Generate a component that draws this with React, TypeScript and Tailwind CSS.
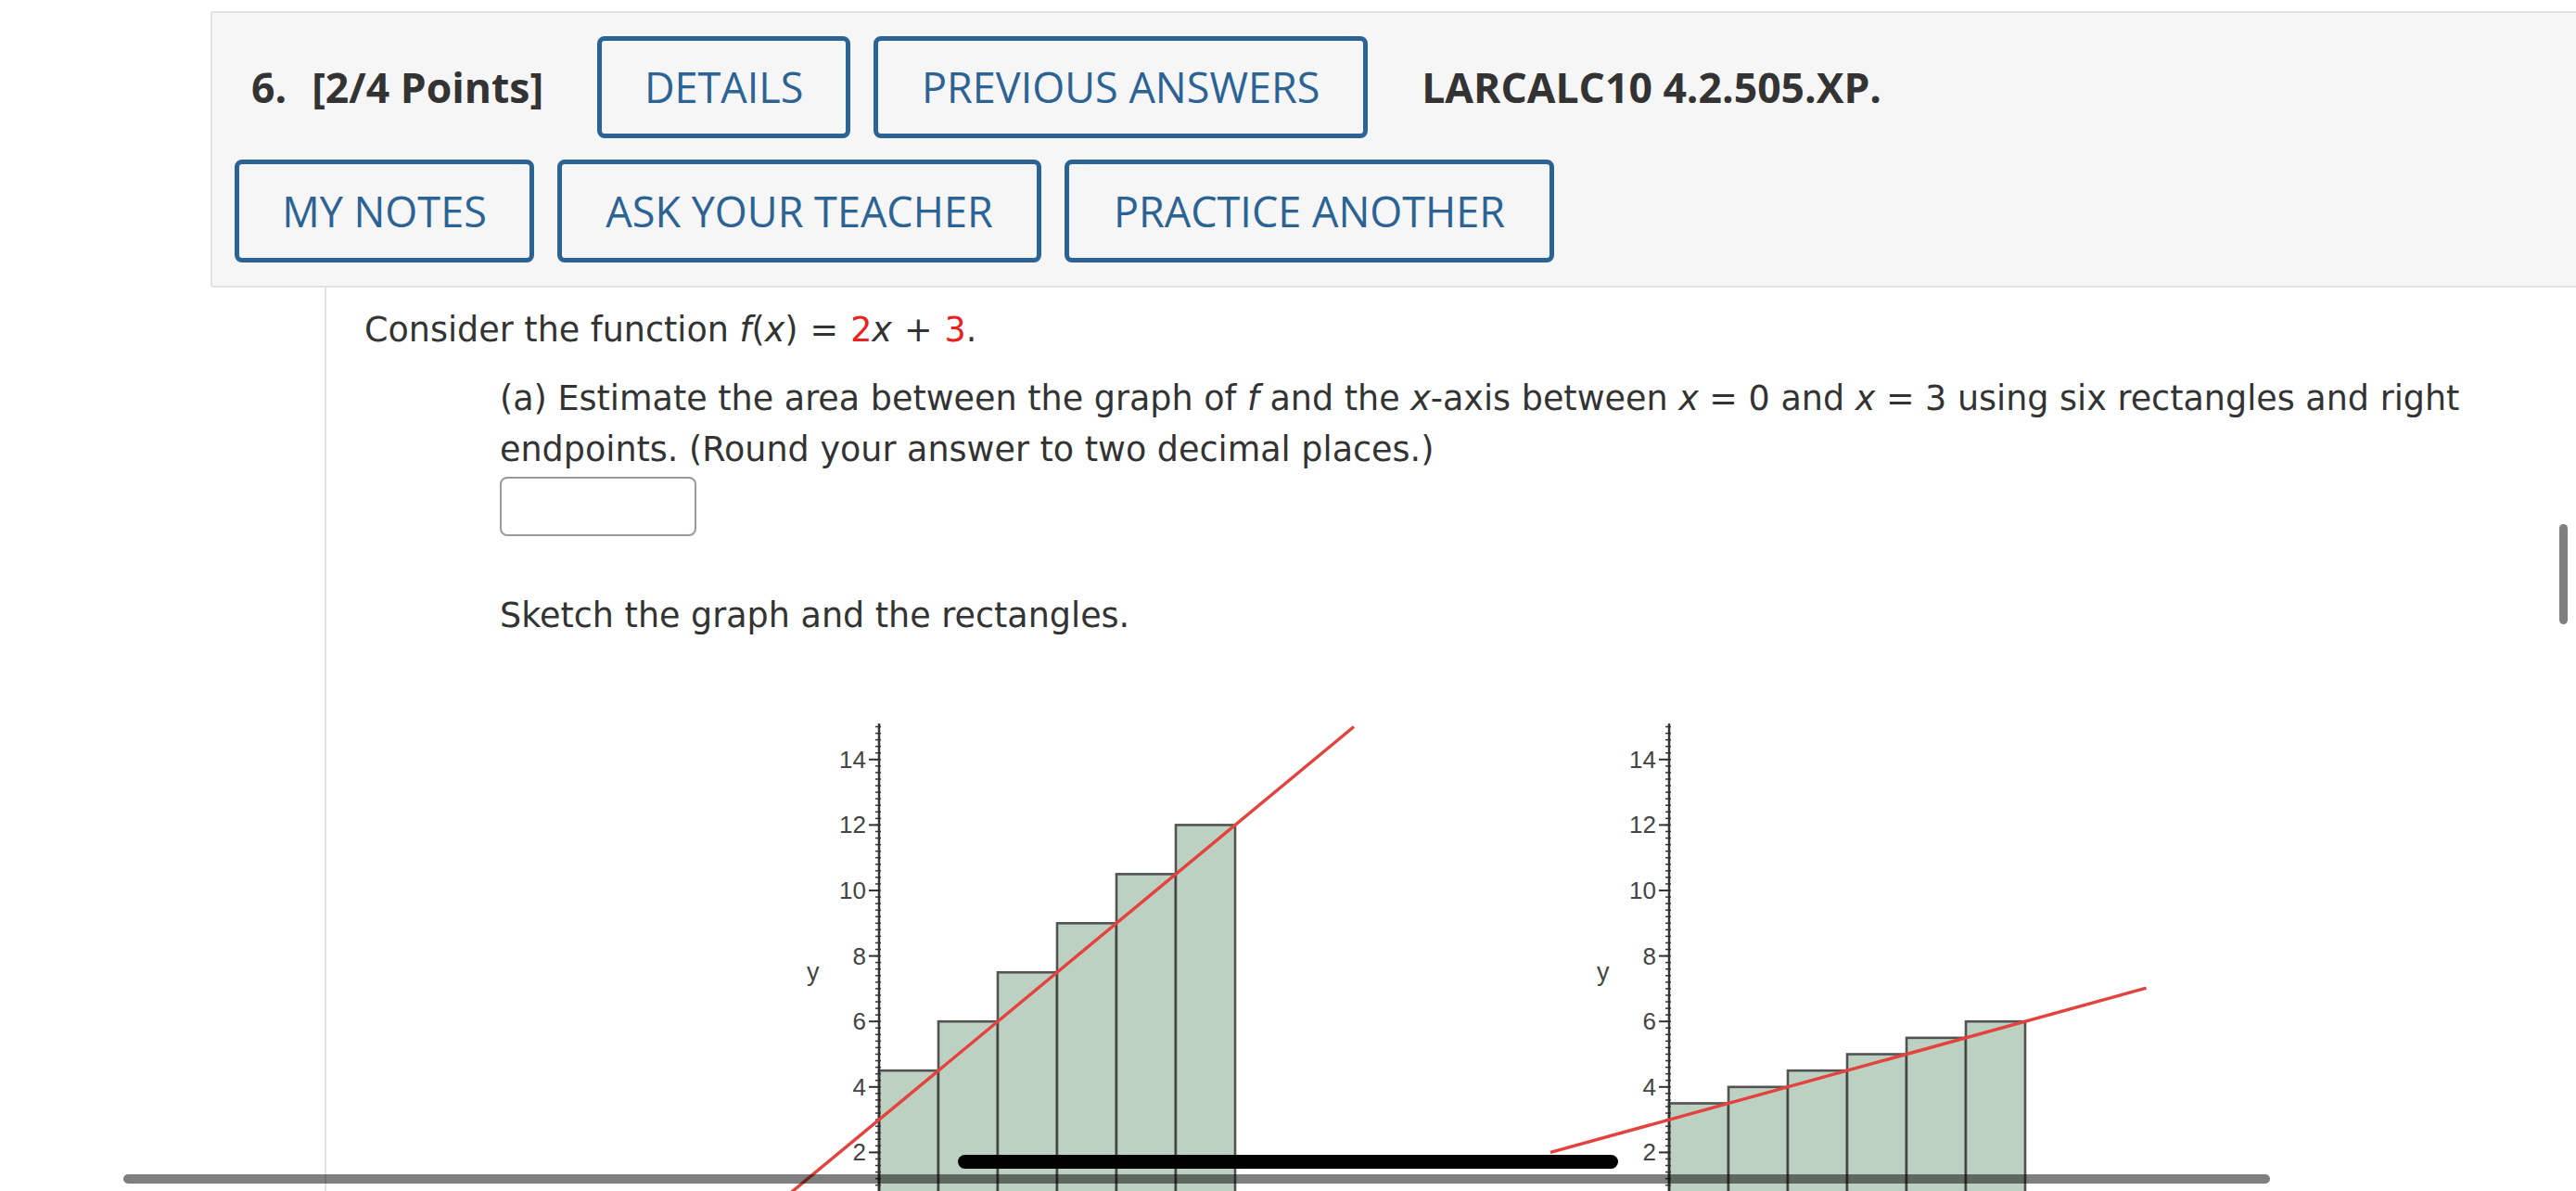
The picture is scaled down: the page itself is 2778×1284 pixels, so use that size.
function NavButton({ label, width }: { label: string; width: string }) {
  return (
    <div
      className={`${width} h-full flex items-center justify-center rounded-[8px] border-[5px] border-[#2c6395] text-[45px] font-medium text-[#2c6395] whitespace-nowrap`}
    >
      {label}
    </div>
  );
}

function Graph({ heights, slope }: { heights: number[]; slope: number }) {
  const ax = 140;
  const X = (u: number) => ax + 128 * u;
  const Y = (v: number) => 544 - 35.3 * v;
  const minor: number[] = [];
  for (let v = 0; v <= 15; v += 0.2) minor.push(v);
  const u0 = -1;
  const u1 = slope === 3 ? 4 : 4.02;
  return (
    <svg width={680} height={540} className="block shrink-0">
      {heights.map((h, i) => (
        <rect
          key={i}
          x={X(i / 2)}
          y={Y(h)}
          width={64}
          height={544 - Y(h) + 20}
          fill="#bdd1c2"
          stroke="#3a3a3a"
          strokeOpacity={0.85}
          strokeWidth={2.6}
        />
      ))}
      <line x1={ax} y1={Y(15.1)} x2={ax} y2={560} stroke="#333" strokeWidth={2.5} />
      {minor.map((v, i) => (
        <line key={i} x1={ax - 4} y1={Y(v)} x2={ax + 2} y2={Y(v)} stroke="#333" strokeWidth={1.5} />
      ))}
      {[2, 4, 6, 8, 10, 12, 14].map((v) => (
        <g key={v}>
          <line x1={ax - 11} y1={Y(v)} x2={ax} y2={Y(v)} stroke="#333" strokeWidth={2} />
          <text
            x={ax - 14}
            y={Y(v) + 9}
            textAnchor="end"
            fontSize={26}
            fill="#444"
            fontFamily="'Liberation Sans', Arial, sans-serif"
          >
            {v}
          </text>
        </g>
      ))}
      <text x={62} y={288} fontSize={27} fill="#444" fontFamily="'Liberation Sans', Arial, sans-serif">
        y
      </text>
      <line
        x1={X(u0)}
        y1={Y(slope * u0 + 3)}
        x2={X(u1)}
        y2={Y(slope * u1 + 3)}
        stroke="#e3423d"
        strokeWidth={3.4}
      />
    </svg>
  );
}

export default function App() {
  return (
    <div className="relative w-[2778px] h-[1284px] overflow-hidden bg-white font-['Open_Sans',sans-serif]">
      {/* question header */}
      <div className="ml-[227px] mt-[12px] h-[298px] border-2 border-r-0 border-[#e2e2e2] rounded-l-[3px] bg-[#f6f6f6] pl-[24px] pt-[25px] flex flex-col gap-[23px]">
        <div className="flex items-center h-[110px]">
          <span className="ml-[18px] text-[44.5px] font-bold text-[#333]">6.</span>
          <span className="ml-[27px] text-[44.5px] font-bold text-[#333]">[2/4 Points]</span>
          <div className="ml-[58px] flex h-full gap-[25px]">
            <NavButton label="DETAILS" width="w-[273px]" />
            <NavButton label="PREVIOUS ANSWERS" width="w-[533px]" />
          </div>
          <span className="ml-[58px] text-[44.5px] font-bold text-[#333]">LARCALC10 4.2.505.XP.</span>
        </div>
        <div className="flex h-[111px] gap-[25px]">
          <NavButton label="MY NOTES" width="w-[323px]" />
          <NavButton label="ASK YOUR TEACHER" width="w-[522px]" />
          <NavButton label="PRACTICE ANOTHER" width="w-[528px]" />
        </div>
      </div>

      {/* question body */}
      <div className="ml-[350px] h-[974px] border-l-2 border-[#e2e2e2] pl-[41px] pt-[18px] font-['DejaVu_Sans',Verdana,sans-serif] text-[36.5px] leading-[55px] text-[#333]">
        <p className="whitespace-nowrap">
          Consider the function <i>f</i>(<i>x</i>)<span className="mx-[13px]">=</span>
          <span className="text-[#e8231d]">2</span>
          <i>x</i>
          <span className="mx-[13px]">+</span>
          <span className="text-[#e8231d]">3</span>.
        </p>
        <div className="ml-[146px] mt-[19px]">
          <p className="whitespace-nowrap">
            (a) Estimate the area between the graph of <i>f</i> and the <i>x</i>-axis between <i>x</i> = 0 and{" "}
            <i>x</i> = 3 using six rectangles and right
            <br />
            endpoints. (Round your answer to two decimal places.)
          </p>
          <div className="mt-[2px] w-[212px] h-[64px] rounded-[8px] border-2 border-[#9a9a9a] bg-white" />
          <p className="mt-[58px] whitespace-nowrap">Sketch the graph and the rectangles.</p>
          <div className="mt-[78px] ml-[269px] flex gap-[172px]">
            <Graph heights={[4.5, 6, 7.5, 9, 10.5, 12]} slope={3} />
            <Graph heights={[3.5, 4, 4.5, 5, 5.5, 6]} slope={1} />
          </div>
        </div>
      </div>

      {/* device overlays */}
      <div className="absolute left-[2760px] top-[565px] w-[9px] h-[108px] rounded-full bg-black/50" />
      <div className="absolute left-[1033px] top-[1245px] w-[712px] h-[15px] rounded-full bg-black" />
      <div className="absolute left-[133px] top-[1266px] w-[2315px] h-[10px] rounded-full bg-black/50" />
    </div>
  );
}
